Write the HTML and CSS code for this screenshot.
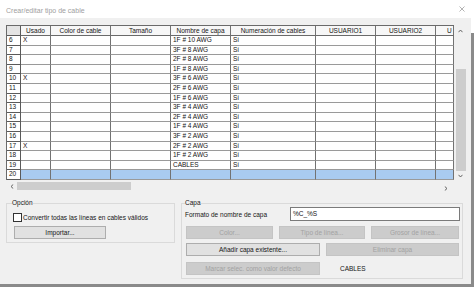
FILE: index.html
```html
<!DOCTYPE html>
<html lang="es">
<head>
<meta charset="utf-8">
<title>Crear/editar tipo de cable</title>
<link rel="stylesheet" href="styles.css">
</head>
<body>
<div class="titlebar">
  <span class="title">Crear/editar tipo de cable</span>
  <svg class="close" width="6" height="6" viewBox="0 0 6 6"><path d="M0.5 0.5 L5.5 5.5 M5.5 0.5 L0.5 5.5" stroke="#a0a0a0" stroke-width="0.8" fill="none"/></svg>
</div>
<div class="window">
  <div class="dialog">
    <div class="tablearea">
      <div class="grid">
        <div class="c h n corner"></div><div class="c h">Usado</div><div class="c h">Color de cable</div><div class="c h">Tamaño</div><div class="c h">Nombre de capa</div><div class="c h">Numeración de cables</div><div class="c h">USUARIO1</div><div class="c h">USUARIO2</div><div class="c h hl">U</div>

        <div class="c n">6</div><div class="c">X</div><div class="c"></div><div class="c"></div><div class="c">1F # 10 AWG</div><div class="c">Sí</div><div class="c"></div><div class="c"></div><div class="c"></div>
        <div class="c n">7</div><div class="c"></div><div class="c"></div><div class="c"></div><div class="c">3F # 8 AWG</div><div class="c">Sí</div><div class="c"></div><div class="c"></div><div class="c"></div>
        <div class="c n">8</div><div class="c"></div><div class="c"></div><div class="c"></div><div class="c">2F # 8 AWG</div><div class="c">Sí</div><div class="c"></div><div class="c"></div><div class="c"></div>
        <div class="c n">9</div><div class="c"></div><div class="c"></div><div class="c"></div><div class="c">1F # 8 AWG</div><div class="c">Sí</div><div class="c"></div><div class="c"></div><div class="c"></div>
        <div class="c n">10</div><div class="c">X</div><div class="c"></div><div class="c"></div><div class="c">3F # 6 AWG</div><div class="c">Sí</div><div class="c"></div><div class="c"></div><div class="c"></div>
        <div class="c n">11</div><div class="c"></div><div class="c"></div><div class="c"></div><div class="c">2F # 6 AWG</div><div class="c">Sí</div><div class="c"></div><div class="c"></div><div class="c"></div>
        <div class="c n">12</div><div class="c"></div><div class="c"></div><div class="c"></div><div class="c">1F # 6 AWG</div><div class="c">Sí</div><div class="c"></div><div class="c"></div><div class="c"></div>
        <div class="c n">13</div><div class="c"></div><div class="c"></div><div class="c"></div><div class="c">3F # 4 AWG</div><div class="c">Sí</div><div class="c"></div><div class="c"></div><div class="c"></div>
        <div class="c n">14</div><div class="c"></div><div class="c"></div><div class="c"></div><div class="c">2F # 4 AWG</div><div class="c">Sí</div><div class="c"></div><div class="c"></div><div class="c"></div>
        <div class="c n">15</div><div class="c"></div><div class="c"></div><div class="c"></div><div class="c">1F # 4 AWG</div><div class="c">Sí</div><div class="c"></div><div class="c"></div><div class="c"></div>
        <div class="c n">16</div><div class="c"></div><div class="c"></div><div class="c"></div><div class="c">3F # 2 AWG</div><div class="c">Sí</div><div class="c"></div><div class="c"></div><div class="c"></div>
        <div class="c n">17</div><div class="c">X</div><div class="c"></div><div class="c"></div><div class="c">2F # 2 AWG</div><div class="c">Sí</div><div class="c"></div><div class="c"></div><div class="c"></div>
        <div class="c n">18</div><div class="c"></div><div class="c"></div><div class="c"></div><div class="c">1F # 2 AWG</div><div class="c">Sí</div><div class="c"></div><div class="c"></div><div class="c"></div>
        <div class="c n">19</div><div class="c"></div><div class="c"></div><div class="c"></div><div class="c">CABLES</div><div class="c">Sí</div><div class="c"></div><div class="c"></div><div class="c"></div>
        <div class="c n">20</div><div class="c sel"></div><div class="c sel"></div><div class="c sel"></div><div class="c sel"></div><div class="c sel"></div><div class="c sel"></div><div class="c sel"></div><div class="c sel"></div>
      </div>
      <div class="vscroll">
        <div class="varrow"><svg width="5" height="4" viewBox="0 0 5 4"><polyline points="0.5,3.2 2.5,1 4.5,3.2" fill="none" stroke="#555" stroke-width="0.9"/></svg></div>
        <div class="vtrack"><div class="vthumb"></div></div>
        <div class="varrow down"><svg width="5" height="4" viewBox="0 0 5 4"><polyline points="0.5,0.8 2.5,3 4.5,0.8" fill="none" stroke="#555" stroke-width="0.9"/></svg></div>
      </div>
    </div>
    <div class="hscroll">
      <div class="harrow"><svg width="4" height="5" viewBox="0 0 4 5"><polyline points="3.2,0.5 1,2.5 3.2,4.5" fill="none" stroke="#555" stroke-width="0.9"/></svg></div>
      <div class="hthumb"></div>
      <div class="hspace"></div>
      <div class="harrow right"><svg width="4" height="5" viewBox="0 0 4 5"><polyline points="0.8,0.5 3,2.5 0.8,4.5" fill="none" stroke="#555" stroke-width="0.9"/></svg></div>
    </div>
    <div class="lower">
      <fieldset class="group opcion">
        <legend>Opción</legend>
        <label class="chkrow"><span class="chk"></span><span>Convertir todas las líneas en cables válidos</span></label>
        <div class="btn importar">Importar...</div>
      </fieldset>
      <fieldset class="group capa">
        <legend>Capa</legend>
        <div class="fmtrow">
          <span>Formato de nombre de capa</span>
          <div class="input">%C_%S</div>
        </div>
        <div class="btnrow r1">
          <div class="btn dis w87">Color...</div>
          <div class="btn dis w86">Tipo de línea...</div>
          <div class="btn dis w88">Grosor de línea...</div>
        </div>
        <div class="btnrow r2">
          <div class="btn w134">Añadir capa existente...</div>
          <div class="btn dis w133">Eliminar capa</div>
        </div>
        <div class="btnrow r3">
          <div class="btn dis w134">Marcar selec. como valor defecto</div>
          <span class="cur">CABLES</span>
        </div>
      </fieldset>
    </div>
  </div>
  <div class="gutter"></div>
</div>
</body>
</html>
```
FILE: styles.css
```css
* { box-sizing: border-box; }
html, body { margin: 0; padding: 0; }
body {
  width: 474px;
  height: 287px;
  overflow: hidden;
  background: #8a8a8a;
  font-family: "Liberation Sans", Arial, sans-serif;
  font-size: 6.5px;
  color: #151515;
}
.titlebar {
  height: 18px;
  background: #fff;
  display: flex;
  align-items: center;
  justify-content: space-between;
  padding: 2px 9px 0 6px;
}
.title { font-size: 7px; color: #a0a0a0; }
.close { align-self: flex-start; margin-top: 4px; }

.window { display: flex; height: 266px; }
.dialog {
  width: 471px;
  height: 100%;
  background: #f0f0f0;
  padding: 7px 0 0 6px;
}
.gutter { flex: 1; background: linear-gradient(#ffffff 15px, #8a8a8a 15px); }

.tablearea { display: flex; height: 155px; }
.grid {
  display: grid;
  grid-template-columns: 14px 30px 60px 60px 60px 85px 60px 60px 18px;
  grid-template-rows: 10px;
  grid-auto-rows: 9.6px;
  width: 448px;
  height: 155px;
  border-left: 1px solid #6a6a6a;
  border-top: 1px solid #6a6a6a;
  background: #fff;
}
.c {
  border-right: 1px solid #727272;
  border-bottom: 1px solid #9a9a9a;
  padding-left: 2px;
  line-height: 8.6px;
  white-space: nowrap;
  overflow: hidden;
}
.h {
  background: #f7f7f7;
  text-align: center;
  border-bottom-color: #6a6a6a;
  line-height: 9px;
  padding-left: 0;
}
.h.hl { text-align: left; padding-left: 11px; }
.n { border-right-color: #5a5a5a; border-bottom-color: #5a5a5a; background: #fff; }
.corner { background: #e4e4e4; }
.sel { background: #a9cbf0; }

.vscroll {
  width: 13px;
  height: 155px;
  display: flex;
  flex-direction: column;
}
.varrow { height: 10px; display: flex; align-items: center; justify-content: center; padding-top: 2px; }
.varrow.down { height: 9px; padding-top: 0; }
.vtrack { flex: 1; padding: 34px 1px 0 2px; }
.vthumb { height: 102px; background: #cdcdcd; }

.hscroll {
  width: 448px;
  height: 11px;
  display: flex;
  align-items: center;
}
.harrow { width: 11px; height: 11px; display: flex; align-items: center; justify-content: center; padding-top: 2px; }
.harrow.right { padding-top: 5px; margin-right: 3px; }
.hthumb { width: 114px; height: 8px; background: #cdcdcd; margin-top: 1px; }
.hspace { flex: 1; }

.lower { display: flex; gap: 6px; margin-top: 8px; align-items: flex-start; }
.group {
  margin: 0;
  border: 1px solid #dadada;
  min-width: 0;
}
.group legend { padding: 0; line-height: 8px; font-size: 6.5px; }
.opcion { width: 169px; padding: 0 3px 3px 5px; }
.capa { width: 282px; padding: 0 2px 3px 3px; }

.chkrow { display: flex; align-items: center; height: 9px; margin-top: 6px; margin-left: 1px; }
.chk { width: 9px; height: 9px; border: 1px solid #333; background: #fff; margin-right: 1px; }

.btn {
  height: 13px;
  display: flex;
  align-items: center;
  justify-content: center;
  background: #e1e1e1;
  border: 1px solid #adadad;
  white-space: nowrap;
}
.btn.dis { background: #cccccc; border-color: #c4c4c4; color: #a2a2a2; }
.importar { width: 92px; margin-top: 4px; margin-left: 2px; }

.fmtrow { display: flex; align-items: center; justify-content: space-between; height: 14px; }
.input {
  width: 170px;
  height: 14px;
  background: #fff;
  border: 1px solid #7a7a7a;
  padding-left: 2px;
  line-height: 12px;
}
.btnrow { display: flex; gap: 6px; align-items: center; margin-left: 1px; }
.r1 { margin-top: 5px; }
.r2 { margin-top: 4px; }
.r3 { margin-top: 6px; }
.w86 { width: 86px; }
.w87 { width: 87px; }
.w88 { width: 88px; }
.w133 { width: 133px; }
.w134 { width: 134px; }
.cur { margin-left: 14px; }
```
